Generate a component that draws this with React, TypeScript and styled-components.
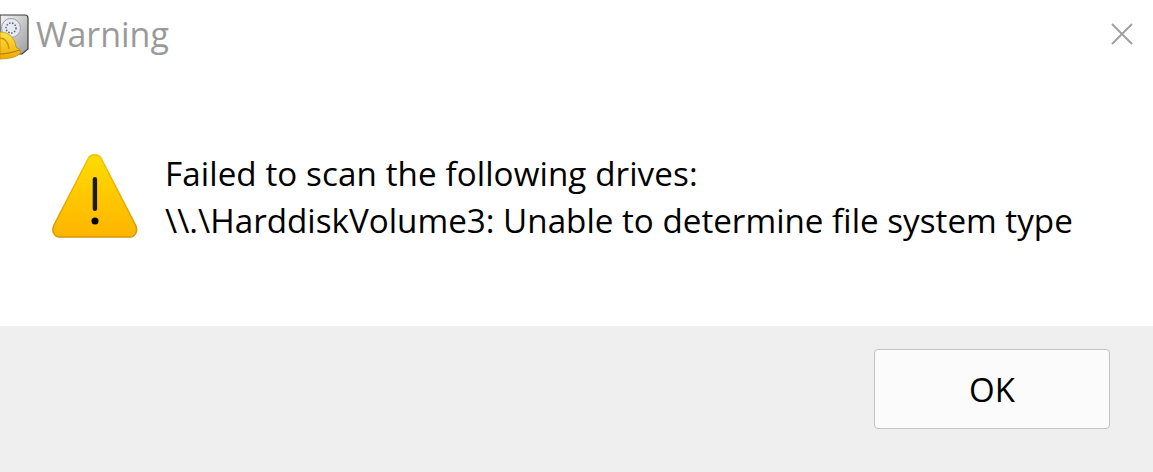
import React from "react";
import styled, { createGlobalStyle } from "styled-components";

const GlobalStyle = createGlobalStyle`
  html, body {
    margin: 0;
    padding: 0;
    background: #ffffff;
  }
  body {
    font-family: "Open Sans", "Noto Sans", sans-serif;
    overflow: hidden;
  }
`;

const Dialog = styled.div`
  display: flex;
  flex-direction: column;
  width: 1153px;
  height: 472px;
  overflow: hidden;
`;

const TitleBar = styled.div`
  display: flex;
  align-items: center;
  height: 68px;
  flex: none;
  padding-right: 19px;
`;

const AppIcon = styled.svg`
  flex: none;
  width: 36px;
  height: 54px;
`;

const Title = styled.div`
  flex: 1;
  font-size: 34px;
  color: #9a9a9a;
`;

const CloseIcon = styled.svg`
  flex: none;
  width: 24px;
  height: 24px;
  stroke: #a0a0a0;
  stroke-width: 2;
  fill: none;
`;

const Body = styled.div`
  flex: 1;
  display: flex;
  align-items: flex-start;
  padding: 85px 0 0 52px;
`;

const WarningIcon = styled.svg`
  flex: none;
  width: 86px;
  height: 86px;
  margin-right: 27px;
`;

const Message = styled.div`
  font-size: 33.2px;
  line-height: 47px;
  color: #000000;
  white-space: nowrap;
  margin-top: -3px;
`;

const MessageLine = styled.div<{ $spacing?: number }>`
  letter-spacing: ${({ $spacing }) => $spacing || 0}px;
`;

const Footer = styled.div`
  flex: none;
  display: flex;
  justify-content: flex-end;
  height: 146px;
  box-sizing: border-box;
  padding: 23px 43px 0 0;
  background: #efefef;
`;

const OkButton = styled.button`
  width: 236px;
  height: 80px;
  border: 1px solid #c4c4c4;
  border-radius: 4px;
  background: #fbfbfb;
  color: #000000;
  font-family: inherit;
  font-size: 33px;
  padding: 0;
`;

export default function App() {
  return (
    <Dialog>
      <GlobalStyle />
      <TitleBar>
        <AppIcon viewBox="0 0 36 54">
          <defs>
            <linearGradient id="drive" x1="0" y1="0" x2="1" y2="1">
              <stop offset="0" stopColor="#f4f4f4" />
              <stop offset="1" stopColor="#9c9c9c" />
            </linearGradient>
            <linearGradient id="helmet" x1="0" y1="0" x2="0" y2="1">
              <stop offset="0" stopColor="#ffe24d" />
              <stop offset="1" stopColor="#efaa00" />
            </linearGradient>
          </defs>
          <path d="M0 8 H25 Q28 8 28 11 V42 L22 47 H0 Z" fill="url(#drive)" stroke="#3d3d3d" strokeWidth="1.200" />
          <circle cx="11" cy="21" r="9.500" fill="#e6e9ee" stroke="#9aa1ad" strokeWidth="1" />
          <circle cx="11" cy="21" r="5" fill="none" stroke="#56657c" strokeWidth="1.500" strokeDasharray="1.500 1.500" />
          <path d="M0 25 C9 25 15 31 16 40 L21 44 C21 49 10 52 0 52 Z" fill="url(#helmet)" stroke="#b98600" strokeWidth="0.7" />
          <path d="M0 31 C5 31 8 35 9 42" fill="none" stroke="#c99400" strokeWidth="1.500" />
          <path d="M0 47 C7 47 13 45 20 43" fill="none" stroke="#a87a00" strokeWidth="1" />
        </AppIcon>
        <Title>Warning</Title>
        <CloseIcon viewBox="0 0 24 24">
          <path d="M2 2 L22 22 M22 2 L2 22" />
        </CloseIcon>
      </TitleBar>
      <Body>
        <WarningIcon viewBox="0 0 86 86">
          <defs>
            <linearGradient id="warn" x1="0" y1="0" x2="0" y2="1">
              <stop offset="0" stopColor="#ffdc00" />
              <stop offset="1" stopColor="#ffb400" />
            </linearGradient>
            <linearGradient id="warnEdge" x1="0" y1="0" x2="0" y2="1">
              <stop offset="0" stopColor="#f2c200" />
              <stop offset="1" stopColor="#d49600" />
            </linearGradient>
          </defs>
          <path
            d="M36.500 5 C39 0.500 46.500 0.500 49 5 L83.500 72 C86.500 78 83 84 78 84 H7.500 C2.500 84 -1 78 2 72 Z"
            fill="url(#warn)"
            stroke="url(#warnEdge)"
            strokeWidth="1.500"
          />
          <rect x="40.700" y="24" width="4.400" height="34" rx="2.200" fill="#1c1c1c" />
          <circle cx="43" cy="68" r="3.500" fill="#000000" />
        </WarningIcon>
        <Message>
          <MessageLine $spacing={0.08}>Failed to scan the following drives:</MessageLine>
          <MessageLine>\\.\HarddiskVolume3: Unable to determine file system type</MessageLine>
        </Message>
      </Body>
      <Footer>
        <OkButton>OK</OkButton>
      </Footer>
    </Dialog>
  );
}
